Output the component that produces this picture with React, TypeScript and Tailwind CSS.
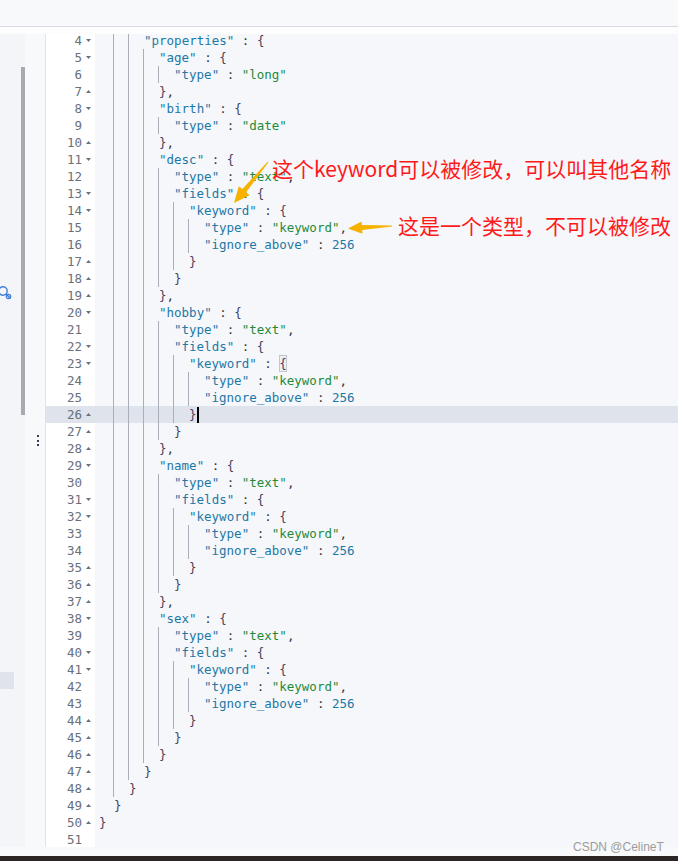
import React from "react";

const MONO = { fontFamily: '"DejaVu Sans Mono", "Liberation Mono", monospace' };

const block = (name: string, close: string) => [
  `        "${name}" : {`,
  '          "type" : "text",',
  '          "fields" : {',
  '            "keyword" : {',
  '              "type" : "keyword",',
  '              "ignore_above" : 256',
  "            }",
  "          }",
  close,
];

// visible part of the mapping, starting at line 4
const SRC: string[] = [
  '      "properties" : {',
  '        "age" : {',
  '          "type" : "long"',
  "        },",
  '        "birth" : {',
  '          "type" : "date"',
  "        },",
  ...block("desc", "        },"),
  ...block("hobby", "        },"),
  ...block("name", "        },"),
  ...block("sex", "        }"),
  "      }",
  "    }",
  "  }",
  "}",
  "",
];

const FIRST = 4;
const ACTIVE = 26;
const MATCH = 23;

function Fold({ dir }: { dir: "down" | "up" | null }) {
  return (
    <span className="flex h-[17px] w-[13px] items-center pl-[4px]">
      {dir === "down" && (
        <svg width="5" height="3" viewBox="0 0 5 3">
          <polygon points="0,0 5,0 2.5,3" fill="#69707d" />
        </svg>
      )}
      {dir === "up" && (
        <svg width="5" height="3" viewBox="0 0 5 3">
          <polygon points="0,3 5,3 2.5,0" fill="#69707d" />
        </svg>
      )}
    </span>
  );
}

function Tokens({ text, line }: { text: string; line: number }) {
  const re = /("[^"]*")|(\d+)|([{}])|([^"\d{}]+)/g;
  const out: React.ReactNode[] = [];
  let afterColon = false;
  let m: RegExpExecArray | null;
  let i = 0;
  while ((m = re.exec(text))) {
    if (m[1]) {
      out.push(
        <span key={i++} className={afterColon ? "text-[#1f8a3b]" : "text-[#1d78a6]"}>
          {m[1]}
        </span>
      );
    } else if (m[2]) {
      out.push(<span key={i++} className="text-[#1d78a6]">{m[2]}</span>);
    } else if (m[3]) {
      const hl = line === MATCH && m[3] === "{";
      out.push(
        <span
          key={i++}
          className={
            hl
              ? "inline-block h-[17px] bg-[#eef0f4] text-[#4a3f5c] shadow-[inset_0_0_0_1px_#c2c6ce]"
              : "text-[#4a3f5c]"
          }
        >
          {m[3]}
        </span>
      );
    } else if (m[4]) {
      if (m[4].includes(":")) afterColon = true;
      out.push(<span key={i++} className="text-[#343741]">{m[4]}</span>);
    }
  }
  return <>{out}</>;
}

function Row({ text, n }: { text: string; n: number }) {
  const trimmed = text.trim();
  const indent = text.length - text.trimStart().length;
  const chunks = trimmed ? indent / 2 : 0;
  const fold = trimmed.endsWith("{") ? "down" : trimmed.startsWith("}") ? "up" : null;
  const active = n === ACTIVE;

  return (
    <div className={`flex h-[17px] ${active ? "bg-[#dee3ec]" : ""}`}>
      <div className={`flex w-[49px] shrink-0 justify-end ${active ? "bg-[#dee3ec]" : "bg-white"}`}>
        <span className="leading-[17px] text-[#69707d]">{n}</span>
        <Fold dir={fold} />
      </div>
      <div className="flex-1 whitespace-pre pl-[4px] leading-[17px]">
        {Array.from({ length: chunks }).map((_, k) => (
          <span
            key={k}
            className={`inline-block h-[17px] w-[15px] align-top ${
              k < chunks - 1 ? "border-r border-[#a9aeb9]" : ""
            }`}
          />
        ))}
        <Tokens text={trimmed} line={n} />
        {active && <span className="-mr-[2px] inline-block h-[16px] w-[2px] translate-y-[1px] bg-black align-top" />}
      </div>
    </div>
  );
}

export default function App() {
  return (
    <div className="relative flex h-[861px] w-[678px] flex-col overflow-hidden bg-white">
      {/* top bar */}
      <div className="h-[27px] shrink-0 border-b border-[#d7dae1] bg-[#f8f9fb]" />
      <div className="h-[7px] shrink-0 bg-[#fdfdfe]" />

      <div className="flex h-[813px] shrink-0">
        {/* left panel */}
        <div className="flex w-[21px] flex-col bg-[#f4f5f8]">
          <div className="mt-[251px] h-[15px] w-[12px] overflow-hidden">
            <svg width="16" height="15" viewBox="0 0 16 15" className="-ml-[4px]">
              <circle cx="7" cy="6" r="4.2" fill="none" stroke="#3f7fd6" strokeWidth="1.4" />
              <path d="M10 9 L14 13" stroke="#3f7fd6" strokeWidth="1.6" strokeLinecap="round" />
              <circle cx="12.5" cy="11.5" r="2.2" fill="none" stroke="#3f7fd6" strokeWidth="1.2" />
            </svg>
          </div>
          <div className="mt-[372px] h-[17px] w-[14px] bg-[#dfe4ec]" />
        </div>
        <div className="w-[4px] bg-[#f4f5f8]">
          <div className="mt-[33px] h-[348px] w-[4px] bg-[#a8aab0]" />
        </div>
        <div className="w-[20px] bg-[#f8f9fb]">
          <div className="ml-[12px] mt-[401px] flex flex-col gap-[2.5px]">
            <span className="h-[2px] w-[2px] bg-[#3b3a58]" />
            <span className="h-[2px] w-[2px] bg-[#3b3a58]" />
            <span className="h-[2px] w-[2px] bg-[#3b3a58]" />
          </div>
        </div>

        {/* editor */}
        <div className="flex-1 overflow-hidden border-l border-[#dfe2e8] bg-[#f5f7fa] text-[12.5px]" style={MONO}>
          <div className="-mt-[2px]">
            {SRC.map((t, i) => (
              <Row key={i} text={t} n={FIRST + i} />
            ))}
          </div>
        </div>
      </div>

      <div className="h-[9px] shrink-0 bg-[#f8f9fb]" />
      <div className="flex-1 bg-[#2b2624]" />

      {/* annotations */}
      <svg className="pointer-events-none absolute left-0 top-0" width="678" height="861">
        <polygon
          points="268.4,162.3 246.1,192.3 249.6,195.2 234,203 238.8,186.2 242.3,189.1 267.6,161.7"
          fill="#f7b200"
        />
        <polygon
          points="392,226.6 362.2,230 362.4,233.8 348,228.5 361.6,221.4 361.8,225 392,225.4"
          fill="#f7b200"
        />
      </svg>
      <div
        className="absolute left-[272px] top-[157px] whitespace-nowrap text-[21px] leading-[22px] text-[#ff1a1a]"
        style={{ fontFamily: '"Noto Sans CJK SC", sans-serif' }}
      >
        这个keyword可以被修改，可以叫其他名称
      </div>
      <div
        className="absolute left-[398px] top-[214px] whitespace-nowrap text-[21px] leading-[22px] text-[#ff1a1a]"
        style={{ fontFamily: '"Noto Sans CJK SC", sans-serif' }}
      >
        这是一个类型，不可以被修改
      </div>
      <div
        className="absolute left-[573px] top-[840px] text-[12px] leading-[14px] text-[#9c9c9c]"
        style={{ fontFamily: '"Liberation Sans", Arial, sans-serif' }}
      >
        CSDN @CelineT
      </div>
    </div>
  );
}
